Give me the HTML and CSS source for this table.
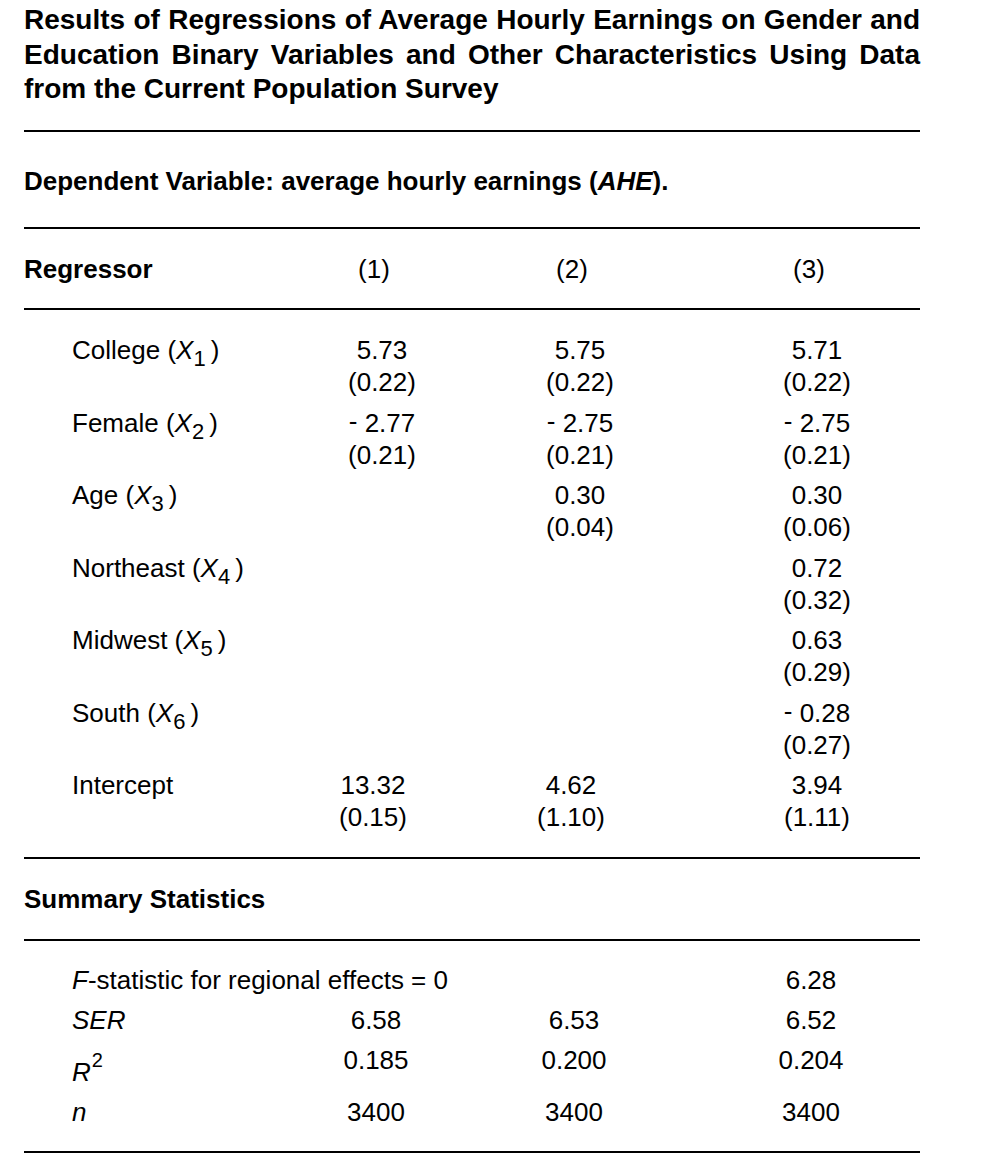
FILE: index.html
```html
<!DOCTYPE html>
<html lang="en">
<head>
<meta charset="utf-8">
<title>Results of Regressions</title>
<link rel="stylesheet" href="styles.css">
</head>
<body>
<div class="page">
  <h1 class="title">
    <span class="tl just">Results of Regressions of Average Hourly Earnings on Gender and</span>
    <span class="tl just">Education Binary Variables and Other Characteristics Using Data</span>
    <span class="tl">from the Current Population Survey</span>
  </h1>
  <div class="rule r1"></div>
  <p class="section dep">Dependent Variable: average hourly earnings (<i>AHE</i>).</p>
  <div class="rule r2"></div>

  <div class="grid head">
    <div class="lbl strong">Regressor</div>
    <div class="c1">(1)</div>
    <div class="c2">(2)</div>
    <div class="c3">(3)</div>
  </div>
  <div class="rule r3"></div>

  <div class="grid body">
    <div class="lbl">College (<i>X</i><sub>1</sub>)</div>
    <div class="c1">5.73<br>(0.22)</div>
    <div class="c2">5.75<br>(0.22)</div>
    <div class="c3">5.71<br>(0.22)</div>

    <div class="lbl">Female (<i>X</i><sub>2</sub>)</div>
    <div class="c1"><span class="neg">-</span> 2.77<br>(0.21)</div>
    <div class="c2"><span class="neg">-</span> 2.75<br>(0.21)</div>
    <div class="c3"><span class="neg">-</span> 2.75<br>(0.21)</div>

    <div class="lbl">Age (<i>X</i><sub>3</sub>)</div>
    <div class="c1"></div>
    <div class="c2">0.30<br>(0.04)</div>
    <div class="c3">0.30<br>(0.06)</div>

    <div class="lbl">Northeast (<i>X</i><sub>4</sub>)</div>
    <div class="c1"></div>
    <div class="c2"></div>
    <div class="c3">0.72<br>(0.32)</div>

    <div class="lbl">Midwest (<i>X</i><sub>5</sub>)</div>
    <div class="c1"></div>
    <div class="c2"></div>
    <div class="c3">0.63<br>(0.29)</div>

    <div class="lbl">South (<i>X</i><sub>6</sub>)</div>
    <div class="c1"></div>
    <div class="c2"></div>
    <div class="c3"><span class="neg">-</span> 0.28<br>(0.27)</div>

    <div class="lbl">Intercept</div>
    <div class="c1 lo">13.32<br>(0.15)</div>
    <div class="c2 lo">4.62<br>(1.10)</div>
    <div class="c3">3.94<br>(1.11)</div>
  </div>
  <div class="rule r4"></div>

  <p class="section summ">Summary Statistics</p>
  <div class="rule r5"></div>

  <div class="grid stats">
    <div class="lbl wide"><i>F</i>-statistic for regional effects = 0</div>
    <div class="c3">6.28</div>

    <div class="lbl"><i>SER</i></div>
    <div class="c1">6.58</div>
    <div class="c2">6.53</div>
    <div class="c3">6.52</div>

    <div class="lbl r2lbl"><i>R</i><sup>2</sup></div>
    <div class="c1">0.185</div>
    <div class="c2">0.200</div>
    <div class="c3">0.204</div>

    <div class="lbl"><i>n</i></div>
    <div class="c1">3400</div>
    <div class="c2">3400</div>
    <div class="c3">3400</div>
  </div>
  <div class="rule r6"></div>
</div>
</body>
</html>
```

FILE: styles.css
```css
html, body {
  margin: 0;
  padding: 0;
  background: #ffffff;
}

body {
  font-family: "Liberation Sans", Arial, Helvetica, sans-serif;
  color: #000000;
}

.page {
  width: 896px;
  padding: 3px 0 0 24px;
}

.title {
  margin: 0;
  font-size: 28px;
  font-weight: 700;
  line-height: 34.5px;
}

.tl {
  display: block;
}

.tl.just {
  text-align: justify;
  text-align-last: justify;
}

.rule {
  height: 2px;
  background: #000000;
}

.r1 { margin-top: 23.5px; }
.r2 { margin-top: 30px; }
.r3 { margin-top: 23px; }
.r4 { margin-top: 24px; }
.r5 { margin-top: 24px; }
.r6 { margin-top: 23px; }

.section {
  margin: 0;
  font-size: 26px;
  font-weight: 700;
  line-height: 32px;
}

.dep { margin-top: 33px; }
.summ { margin-top: 24px; }

.grid {
  display: grid;
  grid-template-columns: 258px 200px 196px 39px 200px;
  font-size: 26px;
  line-height: 32px;
  align-items: start;
}

.grid .lbl { grid-column: 1; }
.grid .c1 { grid-column: 2; text-align: center; }
.grid .c2 { grid-column: 3; text-align: center; }
.grid .c3 { grid-column: 5; text-align: center; }

.lbl.strong { font-weight: 700; }

.head { margin-top: 24px; }
.head .c1, .head .c2, .head .c3 { padding-right: 16px; }

.body {
  margin-top: 24px;
  row-gap: 8.5px;
}

.body .lbl,
.stats .lbl {
  padding-left: 48px;
}

.body .lo { padding-right: 18px; }

.neg {
  display: inline-block;
  line-height: 20px;
  vertical-align: 2px;
}

sub {
  font-size: 22px;
  line-height: 0;
  vertical-align: -7px;
  margin-right: 5px;
}

.stats {
  margin-top: 23px;
  row-gap: 8px;
}

.stats .c1, .stats .c2, .stats .c3 { padding-right: 12px; }

.stats .lbl.wide {
  grid-column: 1 / 5;
  white-space: nowrap;
}

.r2lbl {
  padding-top: 12px;
}

sup {
  font-size: 20px;
  line-height: 0;
  vertical-align: 14px;
  margin-left: 1px;
}
```
